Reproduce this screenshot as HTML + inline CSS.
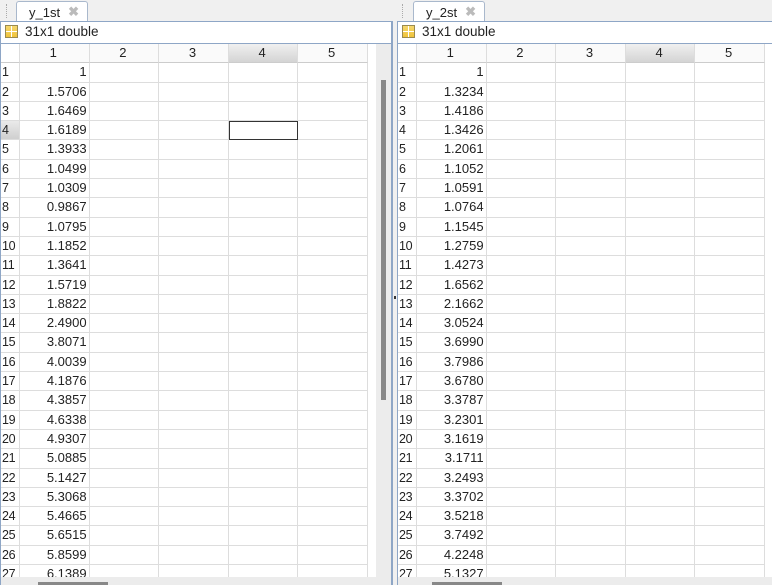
<!DOCTYPE html><html><head><style>
body{margin:0;width:772px;height:585px;overflow:hidden;background:#f0f0f0;font-family:"Liberation Sans",sans-serif;font-size:13px;color:#222;position:relative}
.p{position:absolute;top:0;height:585px;background:#fff;overflow:hidden}
.tabbar{position:absolute;left:0;right:0;top:0;height:21px;background:#f0f0f0}
.tab{position:absolute;top:1px;height:21px;width:72px;background:#fff;border:1px solid #a9b8cc;border-bottom:none;border-radius:3px 3px 0 0;box-sizing:border-box;padding:3px 0 0 12px;font-size:13px}
.tab span{color:#bbb;font-weight:bold;position:absolute;right:8px;top:2px}
.dots{position:absolute;top:4px;width:2px;height:14px;border-left:1px dotted #aaa}
.hdr{position:absolute;left:0;right:0;top:21px;height:23px;border:1px solid #8ea6c6;box-sizing:border-box;background:#fff;padding:2px 0 0 24px;font-size:13.5px}
.ic{position:absolute;left:4px;top:3px;width:13px;height:13px;border:1px solid #9a8a50;background:linear-gradient(#f5d76e,#f0c33a);box-sizing:border-box}
.ic:before{content:"";position:absolute;left:5px;top:0;width:1px;height:11px;background:#fff}
.ic:after{content:"";position:absolute;top:5px;left:0;height:1px;width:11px;background:#fff}
.g{position:absolute;left:0;top:44px}
.r{display:flex;height:19.3px}
.r>*{flex:none;box-sizing:border-box;border-right:1px solid #ddd;border-bottom:1px solid #ddd;height:100%;line-height:18px;font-style:normal;font-weight:normal;white-space:nowrap}
.r>b{width:20px;background:#fff;padding-left:2px;font-size:12.5px;letter-spacing:-0.3px}
.r>i{width:69.6px;text-align:right;padding-right:2px}
.h>*{text-align:center!important;background:#fafafa;border-bottom:1px solid #ccc}
.h>.s{background:linear-gradient(#f0f0f0,#d4d4d4)}
.sel{background:linear-gradient(#eaeaea,#cfcfcf)!important}
.vs{position:absolute;top:44px;height:533px;background:#ececec}
.hs{position:absolute;left:0;right:0;top:577px;height:8px;background:#ececec}
.th{position:absolute;background:#888}
</style></head><body>
<div class="p" style="left:0;width:393px">
<div class="tabbar"><div class="dots" style="left:6px"></div><div class="tab" style="left:16px">y_1st<span>✖</span></div></div>
<div class="hdr"><div class="ic"></div>31x1 double</div>
<div class="g">
<div class="r h"><b></b><i>1</i><i>2</i><i>3</i><i class="s">4</i><i>5</i></div>
<div class="r"><b>1</b><i>1</i><i></i><i></i><i></i><i></i></div>
<div class="r"><b>2</b><i>1.5706</i><i></i><i></i><i></i><i></i></div>
<div class="r"><b>3</b><i>1.6469</i><i></i><i></i><i></i><i></i></div>
<div class="r"><b class="sel">4</b><i>1.6189</i><i></i><i></i><i style="border:1.5px solid #333"></i><i></i></div>
<div class="r"><b>5</b><i>1.3933</i><i></i><i></i><i></i><i></i></div>
<div class="r"><b>6</b><i>1.0499</i><i></i><i></i><i></i><i></i></div>
<div class="r"><b>7</b><i>1.0309</i><i></i><i></i><i></i><i></i></div>
<div class="r"><b>8</b><i>0.9867</i><i></i><i></i><i></i><i></i></div>
<div class="r"><b>9</b><i>1.0795</i><i></i><i></i><i></i><i></i></div>
<div class="r"><b>10</b><i>1.1852</i><i></i><i></i><i></i><i></i></div>
<div class="r"><b>11</b><i>1.3641</i><i></i><i></i><i></i><i></i></div>
<div class="r"><b>12</b><i>1.5719</i><i></i><i></i><i></i><i></i></div>
<div class="r"><b>13</b><i>1.8822</i><i></i><i></i><i></i><i></i></div>
<div class="r"><b>14</b><i>2.4900</i><i></i><i></i><i></i><i></i></div>
<div class="r"><b>15</b><i>3.8071</i><i></i><i></i><i></i><i></i></div>
<div class="r"><b>16</b><i>4.0039</i><i></i><i></i><i></i><i></i></div>
<div class="r"><b>17</b><i>4.1876</i><i></i><i></i><i></i><i></i></div>
<div class="r"><b>18</b><i>4.3857</i><i></i><i></i><i></i><i></i></div>
<div class="r"><b>19</b><i>4.6338</i><i></i><i></i><i></i><i></i></div>
<div class="r"><b>20</b><i>4.9307</i><i></i><i></i><i></i><i></i></div>
<div class="r"><b>21</b><i>5.0885</i><i></i><i></i><i></i><i></i></div>
<div class="r"><b>22</b><i>5.1427</i><i></i><i></i><i></i><i></i></div>
<div class="r"><b>23</b><i>5.3068</i><i></i><i></i><i></i><i></i></div>
<div class="r"><b>24</b><i>5.4665</i><i></i><i></i><i></i><i></i></div>
<div class="r"><b>25</b><i>5.6515</i><i></i><i></i><i></i><i></i></div>
<div class="r"><b>26</b><i>5.8599</i><i></i><i></i><i></i><i></i></div>
<div class="r"><b>27</b><i>6.1389</i><i></i><i></i><i></i><i></i></div>
</div>
<div class="vs" style="left:376px;width:15px"><div class="th" style="left:5px;top:36px;width:5px;height:320px"></div></div>
<div class="hs"><div class="th" style="left:38px;top:5px;width:70px;height:3px"></div></div>
<div style="position:absolute;left:0;top:21px;width:1px;height:564px;background:#8ea6c6"></div>
<div style="position:absolute;left:391px;top:21px;width:2px;height:564px;background:#8ea6c6"></div>
</div>
<div class="p" style="left:397px;width:375px">
<div class="tabbar"><div class="dots" style="left:5px"></div><div class="tab" style="left:16px">y_2st<span>✖</span></div></div>
<div class="hdr" style="border-right:none"><div class="ic"></div>31x1 double</div>
<div class="g">
<div class="r h"><b></b><i>1</i><i>2</i><i>3</i><i class="s">4</i><i>5</i></div>
<div class="r"><b>1</b><i>1</i><i></i><i></i><i></i><i></i></div>
<div class="r"><b>2</b><i>1.3234</i><i></i><i></i><i></i><i></i></div>
<div class="r"><b>3</b><i>1.4186</i><i></i><i></i><i></i><i></i></div>
<div class="r"><b>4</b><i>1.3426</i><i></i><i></i><i></i><i></i></div>
<div class="r"><b>5</b><i>1.2061</i><i></i><i></i><i></i><i></i></div>
<div class="r"><b>6</b><i>1.1052</i><i></i><i></i><i></i><i></i></div>
<div class="r"><b>7</b><i>1.0591</i><i></i><i></i><i></i><i></i></div>
<div class="r"><b>8</b><i>1.0764</i><i></i><i></i><i></i><i></i></div>
<div class="r"><b>9</b><i>1.1545</i><i></i><i></i><i></i><i></i></div>
<div class="r"><b>10</b><i>1.2759</i><i></i><i></i><i></i><i></i></div>
<div class="r"><b>11</b><i>1.4273</i><i></i><i></i><i></i><i></i></div>
<div class="r"><b>12</b><i>1.6562</i><i></i><i></i><i></i><i></i></div>
<div class="r"><b>13</b><i>2.1662</i><i></i><i></i><i></i><i></i></div>
<div class="r"><b>14</b><i>3.0524</i><i></i><i></i><i></i><i></i></div>
<div class="r"><b>15</b><i>3.6990</i><i></i><i></i><i></i><i></i></div>
<div class="r"><b>16</b><i>3.7986</i><i></i><i></i><i></i><i></i></div>
<div class="r"><b>17</b><i>3.6780</i><i></i><i></i><i></i><i></i></div>
<div class="r"><b>18</b><i>3.3787</i><i></i><i></i><i></i><i></i></div>
<div class="r"><b>19</b><i>3.2301</i><i></i><i></i><i></i><i></i></div>
<div class="r"><b>20</b><i>3.1619</i><i></i><i></i><i></i><i></i></div>
<div class="r"><b>21</b><i>3.1711</i><i></i><i></i><i></i><i></i></div>
<div class="r"><b>22</b><i>3.2493</i><i></i><i></i><i></i><i></i></div>
<div class="r"><b>23</b><i>3.3702</i><i></i><i></i><i></i><i></i></div>
<div class="r"><b>24</b><i>3.5218</i><i></i><i></i><i></i><i></i></div>
<div class="r"><b>25</b><i>3.7492</i><i></i><i></i><i></i><i></i></div>
<div class="r"><b>26</b><i>4.2248</i><i></i><i></i><i></i><i></i></div>
<div class="r"><b>27</b><i>5.1327</i><i></i><i></i><i></i><i></i></div>
</div>
<div class="hs"><div class="th" style="left:35px;top:5px;width:70px;height:3px"></div></div>
<div style="position:absolute;left:0;top:21px;width:1px;height:564px;background:#8ea6c6"></div>
</div>
<div style="position:absolute;left:394px;top:296px;width:2px;height:3px;background:#333"></div>
</body></html>
